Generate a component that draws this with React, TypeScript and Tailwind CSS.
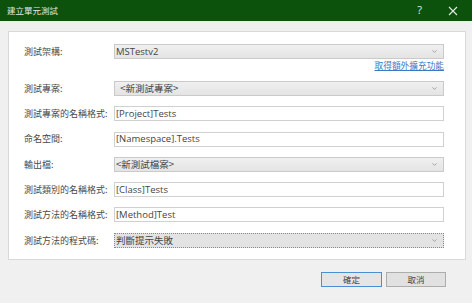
import { ChevronDown } from "lucide-react";

const cjk = "font-['Microsoft_JhengHei','Noto_Sans_CJK_TC',sans-serif]";
const latin = "font-['Open_Sans','Noto_Sans_CJK_TC',sans-serif]";

const Select = ({
  value,
  focused,
  latinText,
}: {
  value: string;
  focused?: boolean;
  latinText?: boolean;
}) => (
  <div
    className={
      "flex h-[15px] w-[330px] items-center justify-between pr-[5px] " +
      (focused
        ? "border border-dotted border-[#8a8a8a] bg-[#e3e3e3] pl-[1px]"
        : "border border-[#cacaca] bg-gradient-to-b from-[#f0f0f0] to-[#e4e4e4] pl-[1px]")
    }
  >
    <span
      className={
        "whitespace-pre leading-none text-[#444] " +
        (latinText ? latin + " text-[9.5px]" : "text-[9.5px]")
      }
    >
      {value}
    </span>
    <ChevronDown className="h-[7px] w-[7px] text-[#8a8a8a]" strokeWidth={2.5} />
  </div>
);

const TextBox = ({ value }: { value: string }) => (
  <div className="flex h-[15px] w-[330px] items-center border border-[#d0d0d0] bg-white pl-[1px]">
    <span className={latin + " whitespace-nowrap text-[9.5px] leading-none text-[#444]"}>
      {value}
    </span>
  </div>
);

const Row = ({ label, children }: { label: string; children: React.ReactNode }) => (
  <div className="flex h-[15px] items-center">
    <span className="w-[90px] whitespace-nowrap text-[9px] text-[#4a4a4a]">{label}</span>
    {children}
  </div>
);

export default function App() {
  return (
    <div className={"h-[306px] w-[474px] bg-white " + cjk}>
      <div className="flex h-[303px] w-[472px] flex-col bg-[#f0f0f0]">
        {/* title bar */}
        <div className="flex h-[21px] items-center bg-[#0c520c] pl-[7px] pr-[14px] text-[8.5px] text-[#e0ebe0]">
          <span className="flex-1">建立單元測試</span>
          <span className={latin + " mr-[26px] text-[11px]"}>?</span>
          <svg width="10" height="10" viewBox="0 0 10 10" className="text-[#dfe9df]">
            <path d="M1 1 L9 9 M9 1 L1 9" stroke="currentColor" strokeWidth="1.1" />
          </svg>
        </div>

        {/* panel */}
        <div className="ml-[8px] mt-[10px] h-[229px] w-[458px] border border-[#d9d9d9] bg-white pl-[15px] pt-[12px]">
          <Row label="測試架構:">
            <Select value="MSTestv2" latinText />
          </Row>
          <div className="flex h-[22px] w-[420px] items-start justify-end pt-[1px]">
            <span className="text-[8.7px] leading-[12px] text-[#3a78c4] underline">取得額外擴充功能</span>
          </div>
          <div className="flex flex-col gap-[10.3px]">
            <Row label="測試專案:">
              <Select value="  <新測試專案>" />
            </Row>
            <Row label="測試專案的名稱格式:">
              <TextBox value="[Project]Tests" />
            </Row>
            <Row label="命名空間:">
              <TextBox value="[Namespace].Tests" />
            </Row>
            <Row label="輸出檔:">
              <Select value="<新測試檔案>" />
            </Row>
            <Row label="測試類別的名稱格式:">
              <TextBox value="[Class]Tests" />
            </Row>
            <Row label="測試方法的名稱格式:">
              <TextBox value="[Method]Test" />
            </Row>
            <Row label="測試方法的程式碼:">
              <Select value="判斷提示失敗" focused />
            </Row>
          </div>
        </div>

        {/* buttons */}
        <div className="mt-[12px] flex justify-end gap-[4px] pr-[26px]">
          <button className="h-[15px] w-[61px] border border-[#4a8fd0] bg-[#e5e5e5] text-[8.5px] leading-none text-[#444]">
            確定
          </button>
          <button className="h-[15px] w-[60px] border border-[#adadad] bg-[#e1e1e1] text-[8.5px] leading-none text-[#444]">
            取消
          </button>
        </div>
      </div>
    </div>
  );
}
